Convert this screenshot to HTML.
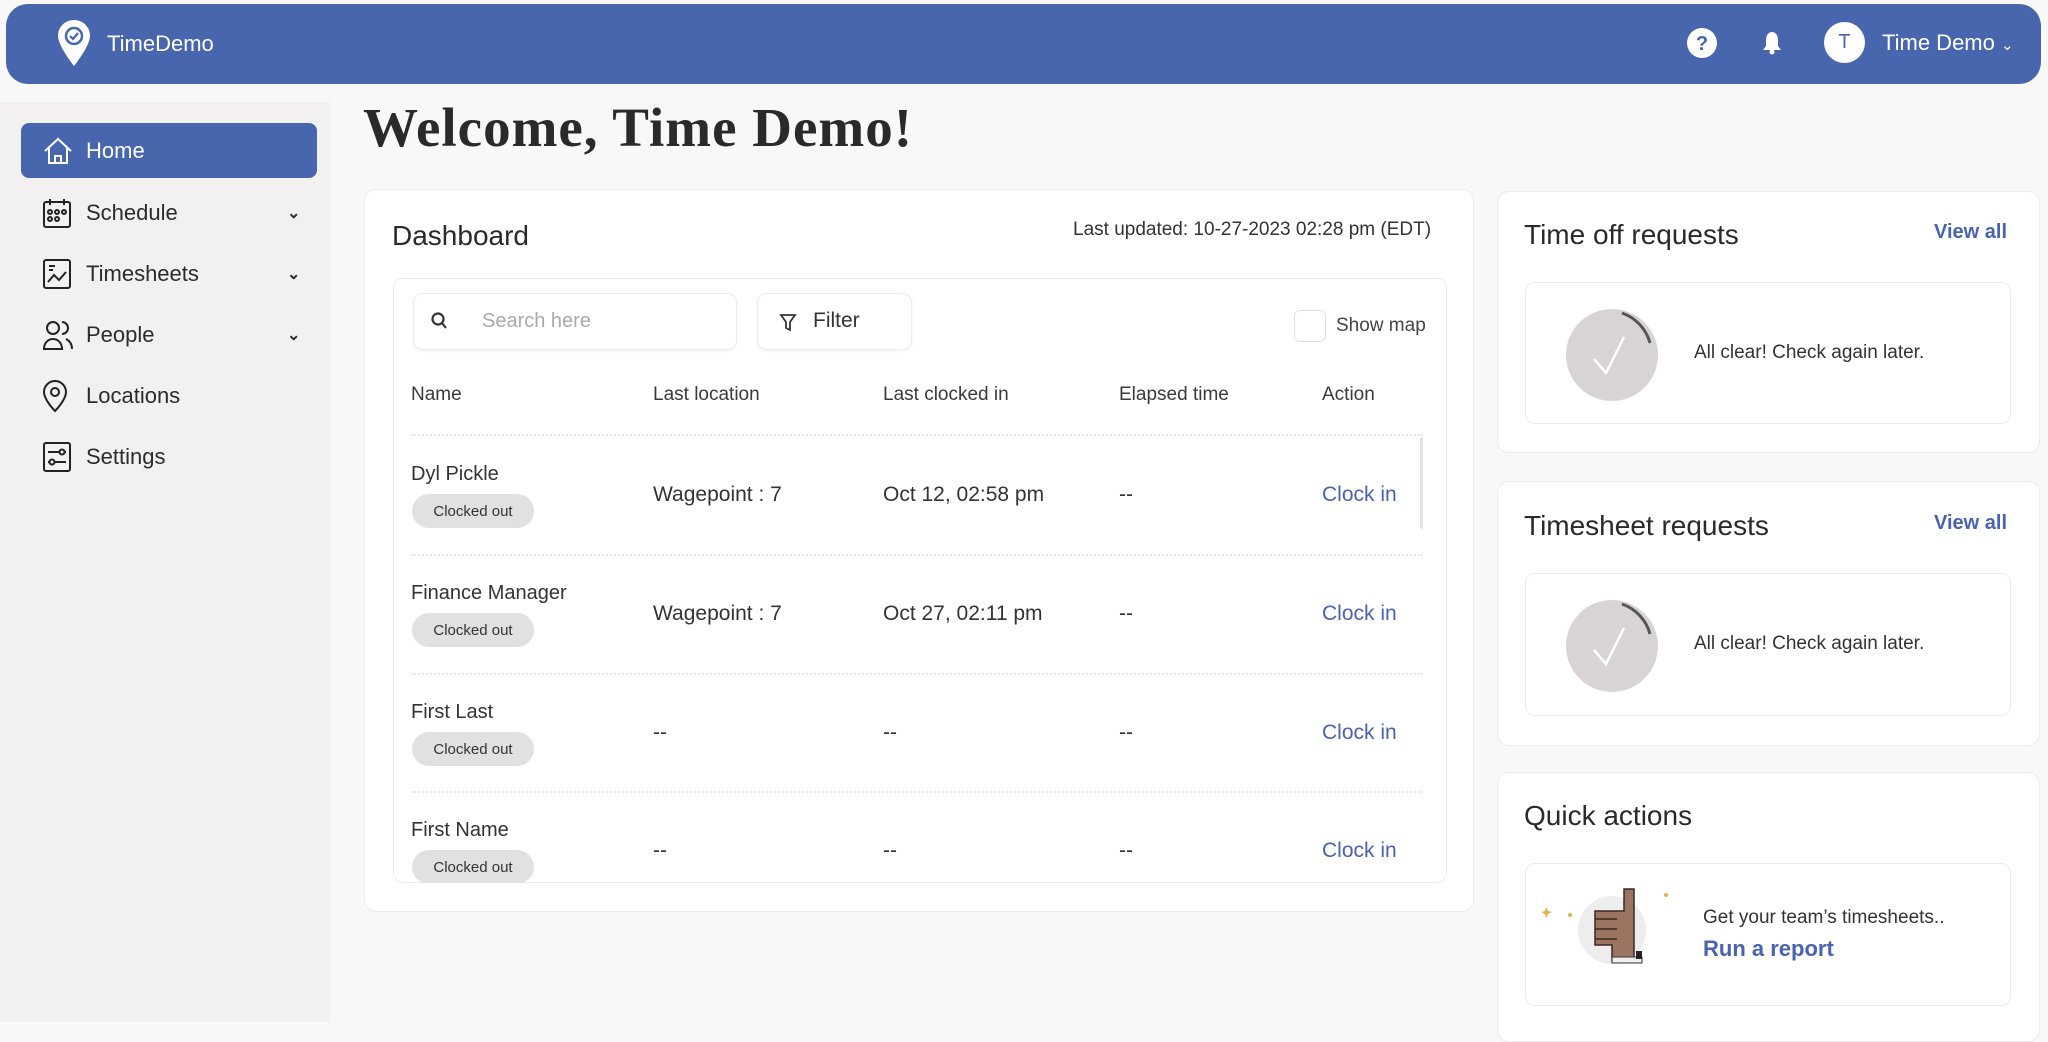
<!DOCTYPE html>
<html><head><meta charset="utf-8"><style>
*{box-sizing:border-box;margin:0;padding:0}
body{width:2048px;height:1022px;overflow:hidden;background:#f8f8f8;font-family:"Liberation Sans",sans-serif;color:#2e2e2e;position:relative}
.a{position:absolute}
.hdr{left:6px;top:4px;width:2035px;height:80px;background:#4766ad;border-radius:22px}
.side{left:0;top:102px;width:330px;height:920px;background:#f3f1f0}
.nav{left:21px;width:296px;height:55px;display:flex;align-items:center;font-size:22px;color:#2b2b2b}
.nav svg{position:absolute;left:21px}
.nav span{position:absolute;left:65px}
.nav .ch{position:absolute;left:266px;font-size:16px}
.card{background:#fff;border:1px solid #ececec;border-radius:12px}
.th{font-size:19px;color:#3a3a3a;top:384px}
.nm{font-size:20px;color:#333}
.cell{font-size:21px;color:#333}
.badge{width:122px;height:34px;background:#e2e1e1;border-radius:17px;font-size:15px;color:#333;display:flex;align-items:center;justify-content:center}
.ci{font-size:21px;color:#4a63b0;left:1322px}
.hr{left:411px;width:1012px;height:0;border-top:2px dotted #e8e8e8}
.ttl{font-size:28px;color:#2a2a2a}
.va{font-size:20px;color:#4a63b0;font-weight:bold}
.in{border:1px solid #ececec;border-radius:10px;background:#fff}
.ac{font-size:19px;color:#333}
</style></head><body>
<div class="a hdr"></div>
<svg class="a" style="left:56px;top:18px" width="36" height="50" viewBox="0 0 36 50"><path d="M18 2C9 2 2 9 2 18c0 10 16 30 16 30s16-20 16-30C34 9 27 2 18 2z" fill="#fff"/><circle cx="18" cy="18" r="8" fill="none" stroke="#4766ad" stroke-width="2.5"/><path d="M14 18l3 3 5-6" fill="none" stroke="#4766ad" stroke-width="2.2"/></svg>
<div class="a" style="left:107px;top:31px;font-size:22px;color:#fff">TimeDemo</div>
<svg class="a" style="left:1686px;top:27px" width="32" height="32" viewBox="0 0 32 32"><circle cx="16" cy="16" r="15" fill="#fff"/><text x="16" y="23" text-anchor="middle" font-family="Liberation Sans" font-weight="bold" font-size="20" fill="#4766ad">?</text></svg>
<svg class="a" style="left:1761px;top:30px" width="22" height="26" viewBox="0 0 22 26"><path d="M11 2c-4 0-6 4-6 8v6l-3 4h18l-3-4v-6c0-4-2-8-6-8z" fill="#fff"/><circle cx="11" cy="22" r="2.5" fill="#fff"/></svg>
<div class="a" style="left:1824px;top:22px;width:41px;height:41px;border-radius:50%;background:#fff;color:#4766ad;font-size:20px;display:flex;align-items:center;justify-content:center">T</div>
<div class="a" style="left:1882px;top:30px;font-size:22px;color:#fff">Time Demo <span style="font-size:15px">&#8964;</span></div>

<div class="a side"></div>
<div class="a" style="left:21px;top:123px;width:296px;height:55px;background:#4766ad;border-radius:8px"></div>
<div class="a nav" style="top:123px;color:#fff"><svg width="32" height="30" viewBox="0 0 32 30" fill="none" stroke="#fff" stroke-width="2"><path d="M3 15L16 3l13 12M7 12v15h18V12M13 27v-7h6v7"/></svg><span>Home</span></div>
<div class="a nav" style="top:185px"><svg width="30" height="32" viewBox="0 0 30 32" fill="none" stroke="#222" stroke-width="2"><rect x="2" y="5" width="26" height="25" rx="2"/><path d="M8 2v6M22 2v6"/><circle cx="8" cy="15" r="2"/><circle cx="15" cy="15" r="2"/><circle cx="22" cy="15" r="2"/><circle cx="8" cy="22" r="2"/><circle cx="15" cy="22" r="2"/></svg><span>Schedule</span><b class="ch">&#8964;</b></div>
<div class="a nav" style="top:246px"><svg width="30" height="32" viewBox="0 0 30 32" fill="none" stroke="#222" stroke-width="2"><rect x="2" y="2" width="26" height="28" rx="2"/><path d="M7 8h6M7 12h4M6 24l6-7 5 5 7-8"/></svg><span>Timesheets</span><b class="ch">&#8964;</b></div>
<div class="a nav" style="top:307px"><svg width="32" height="32" viewBox="0 0 32 32" fill="none" stroke="#222" stroke-width="2"><circle cx="11" cy="9" r="6"/><path d="M2 30c0-6 4-10 9-10s9 4 9 10zM20 3a6 6 0 010 12M24 20c4 2 6 5 6 10"/></svg><span>People</span><b class="ch">&#8964;</b></div>
<div class="a nav" style="top:368px"><svg width="26" height="34" viewBox="0 0 26 34" fill="none" stroke="#222" stroke-width="2"><path d="M13 2C7 2 2 7 2 13c0 8 11 19 11 19s11-11 11-19C24 7 19 2 13 2z"/><circle cx="13" cy="13" r="4"/></svg><span>Locations</span></div>
<div class="a nav" style="top:429px"><svg width="30" height="32" viewBox="0 0 30 32" fill="none" stroke="#222" stroke-width="2"><rect x="2" y="2" width="26" height="28" rx="2"/><path d="M6 11h12M22 11h2M6 21h2M12 21h12"/><circle cx="20" cy="11" r="2.5"/><circle cx="10" cy="21" r="2.5"/></svg><span>Settings</span></div>

<div class="a" style="left:363px;top:96px;font-family:'Liberation Serif',serif;font-size:55px;font-weight:bold;color:#2a2a2a;letter-spacing:1px">Welcome, Time Demo!</div>

<div class="a card" style="left:364px;top:189px;width:1110px;height:723px"></div>
<div class="a" style="left:392px;top:220px;font-size:28px;color:#2a2a2a">Dashboard</div>
<div class="a" style="left:1073px;top:219px;font-size:19px;color:#333">Last updated: 10-27-2023 02:28 pm (EDT)</div>
<div class="a in" style="left:393px;top:278px;width:1054px;height:605px;overflow:hidden"></div>
<div class="a in" style="left:413px;top:293px;width:324px;height:57px;box-shadow:0 1px 3px rgba(0,0,0,.06)"></div>
<svg class="a" style="left:430px;top:311px" width="18" height="20" viewBox="0 0 18 20" fill="none" stroke="#333" stroke-width="2.2"><circle cx="8" cy="8" r="5.5"/><path d="M12 12l4 5"/></svg>
<div class="a" style="left:482px;top:310px;font-size:20px;color:#aaa">Search here</div>
<div class="a in" style="left:757px;top:293px;width:155px;height:57px;box-shadow:0 1px 3px rgba(0,0,0,.06)"></div>
<svg class="a" style="left:779px;top:313px" width="18" height="20" viewBox="0 0 18 20" fill="none" stroke="#333" stroke-width="1.8"><path d="M2 2h14l-5 7v8l-4-2V9z"/></svg>
<div class="a" style="left:813px;top:309px;font-size:21px;color:#333">Filter</div>
<div class="a" style="left:1294px;top:310px;width:32px;height:32px;border:1px solid #e2e2e2;border-radius:6px"></div>
<div class="a" style="left:1336px;top:315px;font-size:19px;color:#444">Show map</div>

<div class="a th" style="left:411px">Name</div>
<div class="a th" style="left:653px">Last location</div>
<div class="a th" style="left:883px">Last clocked in</div>
<div class="a th" style="left:1119px">Elapsed time</div>
<div class="a th" style="left:1322px">Action</div>
<div class="a hr" style="top:434px"></div>
<div class="a" style="left:1420px;top:437px;width:3px;height:92px;background:#e4e4e4;border-radius:2px"></div>

<div class="a" style="left:393px;top:436px;width:1054px;height:447px;overflow:hidden">
<div style="position:absolute;left:0;top:0;width:100%;height:100%;">
<div class="a nm" style="left:18px;top:27px">Dyl Pickle</div>
<div class="a badge" style="left:19px;top:58px">Clocked out</div>
<div class="a cell" style="left:260px;top:47px">Wagepoint : 7</div>
<div class="a cell" style="left:490px;top:47px">Oct 12, 02:58 pm</div>
<div class="a cell" style="left:726px;top:47px">--</div>
<div class="a ci" style="left:929px;top:47px">Clock in</div>
<div class="a hr" style="left:18px;top:118px"></div>

<div class="a nm" style="left:18px;top:146px">Finance Manager</div>
<div class="a badge" style="left:19px;top:177px">Clocked out</div>
<div class="a cell" style="left:260px;top:166px">Wagepoint : 7</div>
<div class="a cell" style="left:490px;top:166px">Oct 27, 02:11 pm</div>
<div class="a cell" style="left:726px;top:166px">--</div>
<div class="a ci" style="left:929px;top:166px">Clock in</div>
<div class="a hr" style="left:18px;top:237px"></div>

<div class="a nm" style="left:18px;top:265px">First Last</div>
<div class="a badge" style="left:19px;top:296px">Clocked out</div>
<div class="a cell" style="left:260px;top:285px">--</div>
<div class="a cell" style="left:490px;top:285px">--</div>
<div class="a cell" style="left:726px;top:285px">--</div>
<div class="a ci" style="left:929px;top:285px">Clock in</div>
<div class="a hr" style="left:18px;top:355px"></div>

<div class="a nm" style="left:18px;top:383px">First Name</div>
<div class="a badge" style="left:19px;top:414px">Clocked out</div>
<div class="a cell" style="left:260px;top:403px">--</div>
<div class="a cell" style="left:490px;top:403px">--</div>
<div class="a cell" style="left:726px;top:403px">--</div>
<div class="a ci" style="left:929px;top:403px">Clock in</div>
</div></div>

<div class="a card" style="left:1497px;top:191px;width:543px;height:262px"></div>
<div class="a ttl" style="left:1524px;top:219px">Time off requests</div>
<div class="a va" style="left:1934px;top:221px">View all</div>
<div class="a in" style="left:1525px;top:282px;width:486px;height:142px"></div>
<svg class="a" style="left:1562px;top:301px" width="106" height="106" viewBox="0 0 106 106"><circle cx="50" cy="54" r="46" fill="#d8d4d4"/><path d="M60 12a44 44 0 0 1 28 30" fill="none" stroke="#555" stroke-width="3"/><path d="M32 58l12 14 18-36" fill="none" stroke="#fff" stroke-width="2.5"/></svg>
<div class="a ac" style="left:1694px;top:342px">All clear! Check again later.</div>

<div class="a card" style="left:1497px;top:481px;width:543px;height:265px"></div>
<div class="a ttl" style="left:1524px;top:510px">Timesheet requests</div>
<div class="a va" style="left:1934px;top:512px">View all</div>
<div class="a in" style="left:1525px;top:573px;width:486px;height:143px"></div>
<svg class="a" style="left:1562px;top:592px" width="106" height="106" viewBox="0 0 106 106"><circle cx="50" cy="54" r="46" fill="#d8d4d4"/><path d="M60 12a44 44 0 0 1 28 30" fill="none" stroke="#555" stroke-width="3"/><path d="M32 58l12 14 18-36" fill="none" stroke="#fff" stroke-width="2.5"/></svg>
<div class="a ac" style="left:1694px;top:633px">All clear! Check again later.</div>

<div class="a card" style="left:1497px;top:772px;width:543px;height:270px"></div>
<div class="a ttl" style="left:1524px;top:800px">Quick actions</div>
<div class="a in" style="left:1525px;top:863px;width:486px;height:143px"></div>
<svg class="a" style="left:1540px;top:885px" width="130" height="90" viewBox="0 0 130 90"><circle cx="72" cy="45" r="34" fill="#eeeded"/><path d="M6 22l2 4 4 1-4 2-2 4-1-4-4-2 4-1z" fill="#e6b04a"/><circle cx="30" cy="30" r="2" fill="#e6b04a"/><circle cx="126" cy="10" r="2" fill="#e6b04a"/><path d="M84 4h10v72H72V60H55V26h29z" fill="#9c7462" stroke="#3a2a22" stroke-width="1.5"/><path d="M55 34h22M55 44h22M55 54h22" stroke="#3a2a22" stroke-width="1.5"/><rect x="72" y="72" width="30" height="6" fill="#eee" stroke="#333"/><rect x="96" y="66" width="6" height="8" fill="#222"/></svg>
<div class="a ac" style="left:1703px;top:907px">Get your team’s timesheets..</div>
<div class="a" style="left:1703px;top:936px;font-size:22px;color:#4a63b0;font-weight:bold">Run a report</div>
</body></html>
